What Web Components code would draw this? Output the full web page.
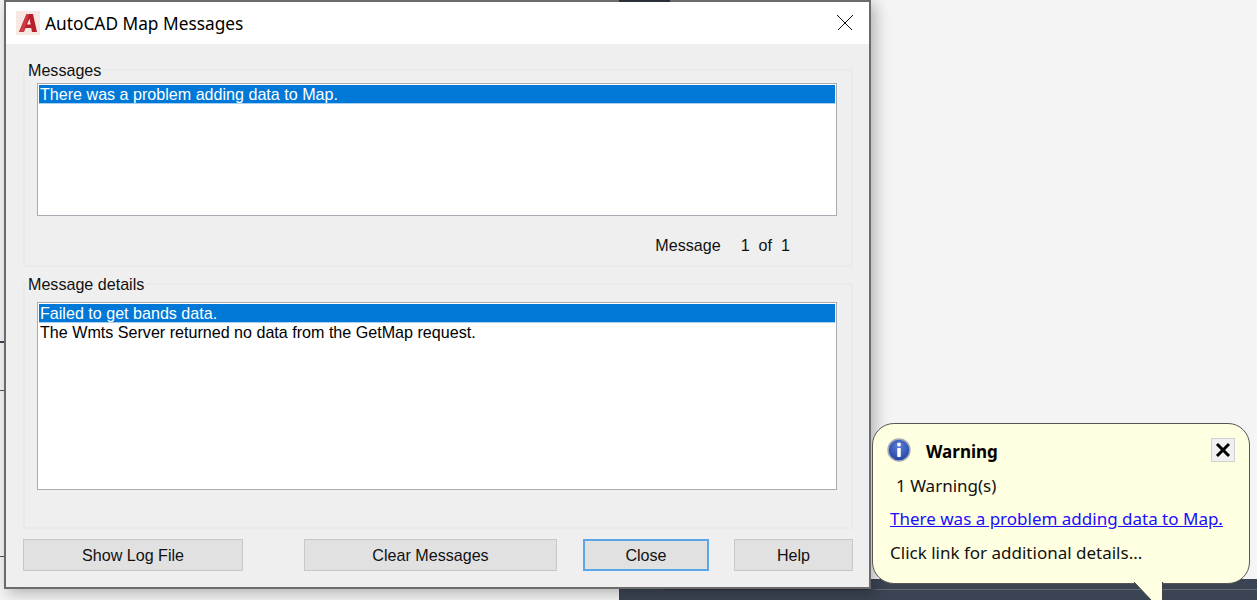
<!DOCTYPE html>
<html>
<head>
<meta charset="utf-8">
<title>AutoCAD Map Messages</title>
<style>
  html, body { margin: 0; height: 100%; overflow: hidden; background: #f4f4f4; }
</style>
</head>
<body>
<cad-desktop>
  <cad-dialog heading="AutoCAD Map Messages">
    <cad-group label="Messages" style="height:198px">
      <cad-listbox style="height:133px">
        <cad-row selected>There was a problem adding data to Map.</cad-row>
      </cad-listbox>
      <div slot="footer" style="display:flex;justify-content:flex-end;padding:20px 47px 0 0;line-height:18px">
        <span>Message</span><span style="margin-left:20px">1</span><span style="margin-left:9px">of</span><span style="margin-left:9px">1</span>
      </div>
    </cad-group>
    <cad-group label="Message details" style="height:246px;margin-top:16px">
      <cad-listbox style="height:188px;margin-top:5px">
        <cad-row selected>Failed to get bands data.</cad-row>
        <cad-row>The Wmts Server returned no data from the GetMap request.</cad-row>
      </cad-listbox>
    </cad-group>
    <cad-buttonbar>
      <cad-button style="width:220px">Show Log File</cad-button>
      <cad-button style="width:253px;margin-left:61px">Clear Messages</cad-button>
      <cad-button focused style="width:126px;margin-left:26px">Close</cad-button>
      <cad-button style="width:119px;margin-left:25px">Help</cad-button>
    </cad-buttonbar>
  </cad-dialog>
  <cad-balloon>
    <span slot="title">Warning</span>
    <span slot="count">1 Warning(s)</span>
    <a slot="link" href="#">There was a problem adding data to Map.</a>
    <span slot="hint">Click link for additional details...</span>
  </cad-balloon>
</cad-desktop>

<script>
// desktop behind the dialog: app strips and a few stray lines
class CadDesktop extends HTMLElement {
  constructor() {
    super();
    this.attachShadow({ mode: 'open' }).innerHTML = `
      <style>
        :host { display: block; position: relative; width: 1257px; height: 600px; overflow: hidden; background: #f4f4f4; }
        .top { position: absolute; z-index: 1; left: 619px; top: 0; width: 51px; height: 2px; background: #2b3038; }
        .band { position: absolute; left: 619px; top: 579px; right: 0; bottom: 0; background: #3b4453; }
        .band::after { content: ''; position: absolute; left: 44px; right: 0; top: 10px; height: 1px; background: linear-gradient(90deg, #2d333d 0, #2d333d 205px, #626a76 215px); }
        .line { position: absolute; left: 0; width: 6px; height: 1px; background: #555; }
      </style>
      <div class="top"></div>
      <div class="band"></div>
      <div class="line" style="top:341px;height:2px;background:#3b4453"></div>
      <div class="line" style="top:390px"></div>
      <div class="line" style="top:556px"></div>
      <slot></slot>`;
  }
}

class CadDialog extends HTMLElement {
  constructor() {
    super();
    this.attachShadow({ mode: 'open' }).innerHTML = `
      <style>
        :host {
          display: flex; flex-direction: column; position: absolute; left: 4px; top: 0;
          width: 867px; height: 589px; box-sizing: border-box;
          background: #efefef; border: 2px solid #6b6b6b;
          box-shadow: 4px 4px 14px rgba(0,0,0,.28);
          font: 16.1px/18px "Liberation Sans", Arial, sans-serif; color: #111;
        }
        .bar { display: flex; align-items: center; height: 42px; flex: none; background: #fff; padding-left: 10px; }
        .bar svg.logo { flex: none; }
        h1 { margin: 0 0 0 5px; flex: 1; font: 400 17.3px "Noto Sans", sans-serif; color: #000; }
        .x { flex: none; margin-right: 16px; }
        .body { flex: 1; padding: 25px 16px 0 17px; display: flex; flex-direction: column; }
      </style>
      <div class="bar">
        <svg class="logo" width="24" height="24" viewBox="0 0 24 24">
          <rect width="24" height="24" fill="#f8e8e4"/>
          <path d="M3 21 L10.5 3 H17 L21 21 H16 L15.2 17 H9.5 L7.8 21 Z" fill="#b5202c"/>
          <path d="M11 13.5 H14.6 L13.5 7.5 Z" fill="#f8e8e4"/>
          <path d="M3 21 L10.5 3 H13 L7.8 21 Z" fill="#d03a40"/>
        </svg>
        <h1></h1>
        <svg class="x" width="16" height="16" viewBox="0 0 16 16" shape-rendering="crispEdges">
          <path d="M.5.5l15 15M15.5.5l-15 15" stroke="#111" fill="none"/>
        </svg>
      </div>
      <div class="body"><slot></slot></div>`;
    this.shadowRoot.querySelector('h1').textContent = this.getAttribute('heading');
  }
}

class CadGroup extends HTMLElement {
  constructor() {
    super();
    this.attachShadow({ mode: 'open' }).innerHTML = `
      <style>
        :host { display: block; position: relative; box-sizing: border-box; border: 2px solid #eaeaea; padding: 12px 14px 0 12px; }
        .label { position: absolute; left: 1px; top: -10px; padding: 0 2px; background: #efefef; line-height: 18px; }
      </style>
      <span class="label"></span>
      <slot></slot>
      <slot name="footer"></slot>`;
    this.shadowRoot.querySelector('.label').textContent = this.getAttribute('label');
  }
}

class CadListbox extends HTMLElement {
  constructor() {
    super();
    this.attachShadow({ mode: 'open' }).innerHTML = `
      <style>
        :host { display: block; box-sizing: border-box; background: #fff; border: 1px solid #a9adb3; padding: 1px; }
      </style>
      <slot></slot>`;
  }
}

class CadRow extends HTMLElement {
  constructor() {
    super();
    this.attachShadow({ mode: 'open' }).innerHTML = `
      <style>
        :host { display: block; height: 18px; line-height: 18px; padding-left: 1px; white-space: nowrap; color: #000; }
        :host([selected]) { background: #0078d7; color: #fff; line-height: 19px; border-bottom: 1px solid #a8d0f0; }
      </style>
      <slot></slot>`;
  }
}

class CadButtonbar extends HTMLElement {
  constructor() {
    super();
    this.attachShadow({ mode: 'open' }).innerHTML = `
      <style>:host { display: flex; margin-top: 10px; }</style>
      <slot></slot>`;
  }
}

class CadButton extends HTMLElement {
  constructor() {
    super();
    this.attachShadow({ mode: 'open' }).innerHTML = `
      <style>
        :host {
          display: flex; align-items: center; justify-content: center; box-sizing: border-box;
          height: 32px; background: #e1e1e1; border: 1px solid #c8c8c8; color: #111; flex: none;
        }
        :host([focused]) { border: 2px solid #5ba6e4; }
      </style>
      <slot></slot>`;
  }
}

class CadBalloon extends HTMLElement {
  constructor() {
    super();
    this.attachShadow({ mode: 'open' }).innerHTML = `
      <style>
        :host {
          display: block; position: absolute; left: 872px; top: 423px; width: 378px; height: 161px; box-sizing: border-box;
          background: #ffffe1; border: 1px solid #555; border-radius: 22px;
          font: 17px "Noto Sans", sans-serif; color: #111;
        }
        .head { display: flex; align-items: center; padding: 13px 14px 0 14px; height: 25px; }
        .head svg { flex: none; }
        .title { flex: 1; margin-left: 15px; padding-top: 3px; font-weight: 700; font-size: 17px; color: #000; }
        .close { flex: none; width: 24px; height: 24px; box-sizing: border-box; border: 1px solid #d0d0d0; background: #f0f0f0; display: flex; align-items: center; justify-content: center; }
        .line { line-height: 22px; padding-left: 17px; }
        .count { padding-left: 23px; margin-top: 13px; }
        .link { margin-top: 11px; }
        .hint { margin-top: 12px; }
        ::slotted(a) { color: #1a0dff; }
        .tail { position: absolute; left: 261px; top: 158px; width: 29px; height: 19px; overflow: visible; }
      </style>
      <div class="head">
        <svg width="24" height="24" viewBox="0 0 24 24">
          <defs>
            <radialGradient id="b" cx=".5" cy=".35" r=".7">
              <stop offset="0" stop-color="#5b82d8"/><stop offset="1" stop-color="#1c3c9c"/>
            </radialGradient>
          </defs>
          <circle cx="12" cy="12" r="11" fill="url(#b)" stroke="#a7adb8" stroke-width="1.5"/>
          <circle cx="12" cy="6.6" r="2" fill="#fff"/>
          <rect x="10.2" y="10" width="3.6" height="9" rx=".8" fill="#fff"/>
        </svg>
        <span class="title"><slot name="title"></slot></span>
        <span class="close">
          <svg width="18" height="18" viewBox="0 0 18 18"><path d="M3 3l12 12M15 3L3 15" stroke="#000" stroke-width="3" fill="none"/></svg>
        </span>
      </div>
      <div class="line count"><slot name="count"></slot></div>
      <div class="line link"><slot name="link"></slot></div>
      <div class="line hint"><slot name="hint"></slot></div>
      <svg class="tail" viewBox="0 0 29 19">
        <path d="M0 0 L18 19 L28.5 19 L28.5 0 Z" fill="#ffffe1"/>
        <path d="M0 0 L18 19 M28.5 19 L28.5 0" stroke="#444" fill="none"/>
      </svg>`;
  }
}

customElements.define('cad-desktop', CadDesktop);
customElements.define('cad-dialog', CadDialog);
customElements.define('cad-group', CadGroup);
customElements.define('cad-listbox', CadListbox);
customElements.define('cad-row', CadRow);
customElements.define('cad-buttonbar', CadButtonbar);
customElements.define('cad-button', CadButton);
customElements.define('cad-balloon', CadBalloon);
</script>
</body>
</html>
